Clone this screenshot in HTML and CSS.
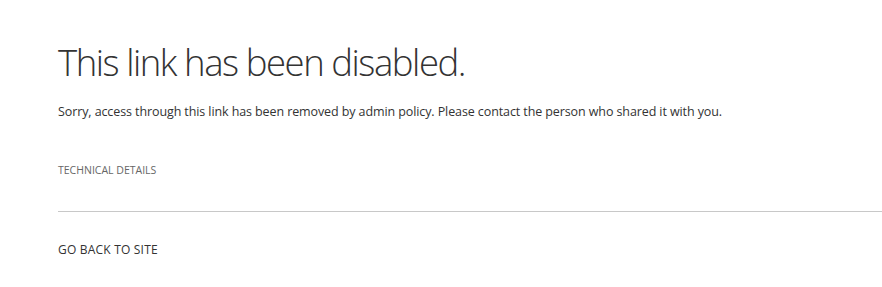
FILE: index.html
```html
<!DOCTYPE html>
<html lang="en">
<head>
<meta charset="utf-8">
<title>This link has been disabled.</title>
<link rel="stylesheet" href="styles.css">
</head>
<body>
<main class="page">
  <h1 class="title">This link has been disabled.</h1>
  <p class="message">Sorry, access through this link has been removed by admin policy. Please contact the person who shared it with you.</p>
  <div class="details">TECHNICAL DETAILS</div>
  <hr class="divider">
  <a class="back" href="#">GO BACK TO SITE</a>
</main>
</body>
</html>
```
FILE: styles.css
```css
html, body {
  margin: 0;
  padding: 0;
  background: #ffffff;
}
body {
  font-family: "Open Sans", "Noto Sans", sans-serif;
  color: #333333;
}
.page {
  padding: 36px 0 0 58px;
  display: flex;
  flex-direction: column;
  align-items: flex-start;
}
.title {
  margin: 0;
  font-weight: 300;
  font-size: 36.5px;
  line-height: 52px;
  color: #333333;
  letter-spacing: -1.45px;
}
.message {
  margin: 15px 0 0 0;
  font-size: 12.5px;
  line-height: 18px;
  color: #333333;
  letter-spacing: -0.1px;
}
.details {
  margin-top: 41px;
  font-size: 10.5px;
  line-height: 16px;
  color: #666666;
  letter-spacing: 0;
}
.divider {
  align-self: stretch;
  margin: 33px 0 0 0;
  border: 0;
  border-top: 1px solid #c8c8c8;
  height: 0;
}
.back {
  margin-top: 29px;
  font-size: 12px;
  line-height: 18px;
  color: #333333;
  text-decoration: none;
  letter-spacing: 0.2px;
}
```
